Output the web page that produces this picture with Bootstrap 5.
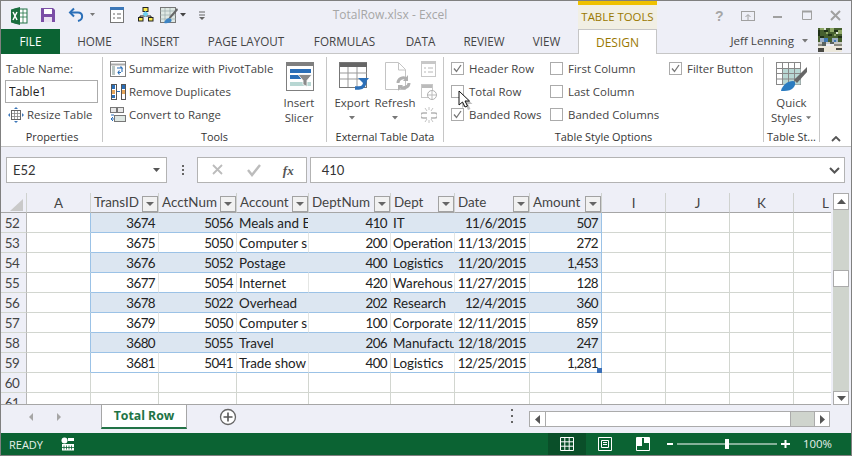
<!DOCTYPE html>
<html lang="en">
<head>
<meta charset="utf-8">
<title>TotalRow.xlsx - Excel</title>
<link rel="stylesheet" href="https://cdn.jsdelivr.net/npm/bootstrap@5.3.0/dist/css/bootstrap.min.css">
<style>
html,body{margin:0;width:852px;height:456px;overflow:hidden;background:#eeeff7}
body{font-family:"Open Sans","Liberation Sans",sans-serif;font-size:11.45px;color:#444;line-height:1}
svg{display:block;flex:none}
.win{width:852px;height:456px;border:1px solid #808080;position:relative;display:flex;flex-direction:column;overflow:hidden}
.titlebar{height:28px;flex:none}
.doc-title{width:368px;text-align:center;color:#a6a6a6;font-size:12px;padding-right:8px}
.ctx{width:79px;height:28px;background:#f1efe4;border-top:4px solid #efc100;color:#9a7800;font-size:11.4px}
.tabs{height:25px;flex:none;border-bottom:1px solid #c6c6c6;font-size:11.7px;color:#444}
.tabs .tb{height:25px;display:flex;align-items:center;justify-content:center;flex:none}
.tab-file{width:59px;background:#0b6333;color:#fff}
.w1{width:69px}.w2{width:62px}.w3{width:110px}.w4{width:87px}.w5{width:65px}.w6{width:62px}.w7{width:63px}
.tab-design{width:79px;background:#fff;border:1px solid #c6c6c6;border-bottom:0;color:#9a7800;height:26px!important;font-size:12px}
.user{font-size:11.6px;color:#444;margin-left:auto}
.ribbon{height:93px;flex:none;background:#fff;border-bottom:1px solid #c6c6c6;padding:3px 0 0 1px}
.grp{height:85px;border-right:1px solid #c6c6c6;display:flex;flex-direction:column;flex:none}
.grp-body{height:75px;display:flex;flex:none}
.grp-label{height:13px;text-align:center;color:#333;font-size:10.9px;flex:none;white-space:nowrap}
.g1{width:101px}.g2{width:224px}.g3{width:117px}.g4{width:320px}.g5{width:56px}
.small-col{display:flex;flex-direction:column}
.small-row{height:23px;display:flex;align-items:center;white-space:nowrap;flex:none}
.big{display:flex;flex-direction:column;align-items:center;text-align:center;line-height:15px}
.ico{margin-right:3px}
.name-input{width:93px;height:23px;border:1px solid #ababab;border-radius:0;padding:0 3px;font:inherit;font-size:12px;color:#222;box-shadow:none;min-height:0}
.form-check-input.xl{width:13px;height:13px;margin:0 5px 0 0;border:1px solid #ababab;border-radius:0;flex:none;float:none}
.form-check-input.xl:checked{background-color:#fff;border-color:#ababab;background-size:13px 13px;background-image:url("data:image/svg+xml,%3Csvg xmlns='http://www.w3.org/2000/svg' viewBox='0 0 13 13'%3E%3Cpath d='M3 6.500l2.500 3L10 3' fill='none' stroke='%23777' stroke-width='1.300'/%3E%3C/svg%3E")}
.fbar{height:46px;flex:none;padding:10px 6px 0 5px}
.fbox{height:26px;background:#fff;border:1px solid #b3b3b3;display:flex;align-items:center;color:#333;font-family:Lato,"Liberation Sans",sans-serif;font-size:13px}
.namebox{width:161px;padding:0 5px 0 6px}
.fnbox{width:110px;padding:0 12px 0 13px}
.formula{width:536px;margin-left:3px;padding:0 0 0 11px}
.gridrow{height:212px;flex:none}
.gridwrap{width:830px;height:212px;overflow:hidden;border-bottom:1px solid #a6a6a6;flex:none}
.sheet.table{width:857px;table-layout:fixed;border-collapse:separate;border-spacing:0;margin:0;font-family:Lato,"Liberation Sans",sans-serif;font-size:13.4px;color:#222;--bs-table-bg:transparent}
.sheet.table>:not(caption)>*>*{padding:0 2px;height:20px;border:0;border-right:1px solid #d2d6d0;border-bottom:1px solid #d2d6d0;white-space:nowrap;overflow:hidden;background:#fff;box-shadow:none;vertical-align:middle;line-height:18px;font-weight:400;color:#222}
.sheet.table>thead>tr>th{background:#eeeff7;border-right-color:#cfd2cf;border-bottom:1px solid #a6a6a6;color:#444;text-align:center;padding:0}
.sheet.table>thead>tr>th.h{text-align:left;padding:0 0 0 3px;color:#444}
.sheet.table>tbody>tr>td.rh{background:#eeeff7;text-align:center;color:#444;border-right-color:#b5b5b5;padding:0 3px 0 0;letter-spacing:-.4px}
.hin{display:flex;justify-content:space-between;height:19px;align-items:flex-start;line-height:18px}
.fb{width:16px;height:16px;margin-top:3px;border:1px solid #a2a2a2;background:#f1f1f1;display:flex;align-items:center;justify-content:center;flex:none}
.sheet.table>tbody>tr>td.r{text-align:right;padding-right:3px;letter-spacing:-.6px}
.sheet.table>tbody>tr>td.bl{border-bottom-color:#9bc2e6}
.sheet.table>tbody>tr>td.vl{border-right-color:#e4e6e4}
.sheet.table>tbody>tr>td.be{border-right-color:#9bc2e6}
.sheet.table>tbody>tr.band>td.c{background:#dce6f1;border-right-color:#dce6f1}
.sheet.table>tbody>tr.band>td.be{border-right-color:#9bc2e6}
.sheet.table>tbody>tr>td.a{border-right-color:#9bc2e6}
.handle{position:absolute;left:596px;top:367px;width:5px;height:5px;background:#3a6fb7}
.vs{width:16px;height:212px;margin-left:2px;background:#cfd4cd;flex:none;display:flex;flex-direction:column}
.vs .btn-x{height:17px;background:#fff;border:1px solid #ababab;display:flex;align-items:center;justify-content:center;flex:none}
.vthumb{height:17px;margin-top:60px;background:#fff;border:1px solid #ababab;flex:none}
.tabbar{height:28px;flex:none}
.sheet-tab{width:86px;height:24px;background:#fff;border:1px solid #a6a6a6;border-top:0;border-bottom:2px solid #217346;color:#217346;font-weight:700;font-size:12.3px;display:flex;align-items:center;justify-content:center}
.hs{width:301px;height:16px;border:1px solid #ababab;background:#cfd4cd;display:flex;margin-top:6px}
.hs .e{width:15px;background:#fff;display:flex;align-items:center;justify-content:center;flex:none}
.hs .t{width:246px;background:#fff;border-left:1px solid #ababab;border-right:1px solid #ababab;flex:none}
.statusbar{height:22px;flex:none;background:#0b6333;color:#e8f0ea;font-size:11px}
.viewbtn{width:38px;height:22px;display:flex;align-items:center;justify-content:center;flex:none}
.viewbtn.on{background:#0a4f29}
.macro{margin-left:18px}
.zoomv{width:57px;padding-left:9px;font-size:11.4px;flex:none}
.cursor{position:absolute;left:456px;top:89px}
</style>
</head>
<body>
<div class="win">

<header class="titlebar d-flex align-items-start">
  <svg width="209" height="28" viewBox="1 1 209 28">
    <rect x="15" y="9" width="12" height="14" fill="#fff" stroke="#217346"/>
    <path d="M19 9v14M23 9v14M15 13h12M15 17h12" stroke="#217346" stroke-width=".8"/>
    <path d="M11 9.500l9-2.500v18l-9-2.500z" fill="#1a6e3f"/>
    <path d="M13 12l4 8M17 12l-4 8" stroke="#fff" stroke-width="1.500"/>
    <path d="M41 8h12l2 2v12h-14z" fill="#7b4ea6"/>
    <rect x="44" y="9" width="8" height="5" fill="#fff"/>
    <rect x="44" y="17" width="8" height="5" fill="#e9e1f1"/>
    <path d="M74 8.500l-4 4 4 4" fill="none" stroke="#2b6fb8" stroke-width="2"/>
    <path d="M71 12.500h7c5 0 6 7 0 8.500" fill="none" stroke="#2b6fb8" stroke-width="2"/>
    <path d="M90 13h5l-2.500 3z" fill="#777"/>
    <rect x="110.500" y="7.500" width="13" height="15" fill="#fff" stroke="#777"/>
    <rect x="110" y="7" width="14" height="3" fill="#3d77b8"/>
    <path d="M113 14h2M117 14h4M113 18h2M117 18h4" stroke="#666"/>
    <path d="M145.500 11v4M140 18v-2h11v2" fill="none" stroke="#222"/>
    <rect x="143" y="7.500" width="5" height="4" fill="#fbe94a" stroke="#222"/>
    <rect x="138.500" y="17.500" width="4.500" height="3.500" fill="#fbe94a" stroke="#222"/>
    <rect x="148.500" y="17.500" width="4.500" height="3.500" fill="#fbe94a" stroke="#222"/>
    <path d="M145.500 11l3 3-3 3-3-3z" fill="#6dcff0"/>
    <rect x="160.500" y="7.500" width="15" height="15" fill="#dfe8e4" stroke="#777"/>
    <path d="M160 11h16M165 8v14M170 8v14M160 15h16M160 19h16" stroke="#9aa" stroke-width=".7"/>
    <path d="M177 8l-7 8-2 3 3-1 7-8z" fill="#666"/>
    <path d="M164 23c1-4 5-6 7-4s-1 5-7 4z" fill="#3d84c4"/>
    <path d="M180 13h6l-3 3.500z" fill="#444"/>
    <path d="M199 12h6M199 15h6" stroke="#666" stroke-width="1"/><path d="M199 17h6l-3 3z" fill="#666"/>
  </svg>
  <div class="doc-title align-self-center">TotalRow.xlsx - Excel</div>
  <div class="ctx d-flex align-items-center justify-content-center">TABLE TOOLS</div>
  <svg width="194" height="28" viewBox="658 1 194 28">
    <text x="716" y="21" font-family="Liberation Sans" font-weight="700" font-size="14" fill="#a6a6a6">?</text>
    <rect x="742.500" y="11.500" width="13" height="9" fill="none" stroke="#a0a0a0"/>
    <path d="M749 20v-5M746.500 17l2.500-2.500 2.500 2.500" fill="none" stroke="#a0a0a0"/>
    <path d="M774 17h9" stroke="#a0a0a0" stroke-width="2"/>
    <path d="M803.500 11.500h9v8h-9z" fill="none" stroke="#a0a0a0"/><path d="M803 11.500h10" stroke="#a0a0a0" stroke-width="2"/>
    <path d="M832 11l9 9M841 11l-9 9" stroke="#a0a0a0" stroke-width="2"/>
  </svg>
</header>

<nav class="tabs d-flex">
  <div class="tb tab-file">FILE</div>
  <div class="tb w1">HOME</div><div class="tb w2">INSERT</div><div class="tb w3">PAGE LAYOUT</div><div class="tb w4">FORMULAS</div><div class="tb w5">DATA</div><div class="tb w6">REVIEW</div><div class="tb w7">VIEW</div>
  <div class="tb tab-design">DESIGN</div>
  <div class="user d-flex align-items-center">Jeff Lenning
    <svg class="ms-2" style="margin-right:9px" width="7" height="4" viewBox="0 0 7 4"><path d="M0 0h6l-3 3.500z" fill="#777"/></svg>
    <svg width="24" height="24" viewBox="0 0 12 12" shape-rendering="crispEdges" style="margin:-2px 9px 0 0">
      <path fill="#46602f" d="M0 0h12v7h-12z"/>
      <path fill="#8fa868" d="M1 0h2v1h-2zM6 0h2v2h-2zM10 1h2v2h-2zM4 2h1v1h-1zM8 3h1v1h-1z"/>
      <path fill="#1f3018" d="M0 1h1v3h-1zM3 1h2v1h-2zM8 1h2v1h-2zM5 3h2v1h-2zM10 4h2v1h-2zM1 4h2v1h-2z"/>
      <path fill="#dfe6d8" d="M3 0h1v1h-1zM9 2h1v1h-1z"/>
      <path fill="#9aaec4" d="M1 5h4v2h-4zM7 5h3v2h-3z"/>
      <path fill="#3f78b4" d="M3 5h2v2h-2zM8 6h1v1h-1z"/>
      <path fill="#c9cac4" d="M0 7h12v1h-12z"/>
      <path fill="#5a6461" d="M2 7h2v2h-2zM6 7h2v1h-2z"/>
      <path fill="#ece8dc" d="M0 9h12v3h-12z"/>
      <path fill="#8a8a80" d="M0 8h2v1h-2zM8 8h4v1h-4z"/>
      <path fill="#4a4a44" d="M0 10h3v2h-3zM9 10h3v1h-3z"/>
    </svg>
  </div>
</nav>

<section class="ribbon d-flex">
  <div class="grp g1">
    <div class="grp-body small-col" style="padding-left:3px">
      <div class="small-row" style="padding-left:1px">Table Name:</div>
      <div class="small-row"><input class="form-control name-input" value="Table1"></div>
      <div class="small-row">
        <svg class="ico" style="margin-left:3px" width="16" height="16" viewBox="0 0 16 16"><rect x="3.500" y="3.500" width="9" height="9" fill="#fff" stroke="#666"/><path d="M6.500 4v8M9.500 4v8M4 6.500h8M4 9.500h8" stroke="#888" stroke-width=".8"/><path d="M8 0l2 2h-4zM8 16l2-2h-4zM0 8l2-2v4zM16 8l-2-2v4z" fill="#3d77b8"/></svg>
        Resize Table
      </div>
    </div>
    <div class="grp-label">Properties</div>
  </div>

  <div class="grp g2">
    <div class="grp-body">
      <div class="small-col" style="width:184px;padding-left:7px">
        <div class="small-row">
          <svg class="ico" width="16" height="16" viewBox="0 0 16 16"><rect x=".5" y=".5" width="15" height="15" fill="#fff" stroke="#808080"/><path d="M1 3.500h14" stroke="#aaa" stroke-width="2"/><rect x="2" y="5" width="3" height="9" fill="#b9c6c4"/><path d="M7 7h5l-1.500-1.500M12 7v4m-2.500-1.500l-1.500 2 1.500 2M8 11.500h3" fill="none" stroke="#2b6fb8" stroke-width="1.100"/></svg>
          Summarize with PivotTable
        </div>
        <div class="small-row">
          <svg class="ico" width="16" height="16" viewBox="0 0 16 16" shape-rendering="crispEdges"><rect x="1" y="0" width="5" height="15" fill="#fff" stroke="#555"/><path d="M2 1h3v4h-3z" fill="#2b6fb8"/><path d="M2 6h3v4h-3z" fill="#e5a55a"/><path d="M2 11h3v3h-3z" fill="#2b6fb8"/><rect x="11" y="0" width="4" height="15" fill="#fff" stroke="#555"/><path d="M12 1h3v4h-3z" fill="#2b6fb8"/><path d="M12 6h3v4h-3z" fill="#e5a55a"/><path d="M7 7h3v1h-3z" fill="#2b6fb8"/></svg>
          Remove Duplicates
        </div>
        <div class="small-row">
          <svg class="ico" width="16" height="16" viewBox="0 0 16 16"><rect x=".5" y=".5" width="6" height="5" fill="#e8e8e8" stroke="#777"/><rect x="7.500" y=".5" width="6" height="5" fill="#e8e8e8" stroke="#777"/><rect x="4.500" y="8.500" width="11" height="6" fill="#dfe8e4" stroke="#777"/><path d="M1 8h3M3 10l-2 2 2 2M1 12h3" fill="none" stroke="#2b6fb8"/></svg>
          Convert to Range
        </div>
      </div>
      <div class="big" style="width:32px;margin-left:-3px;padding-top:5px">
        <svg width="28" height="29" viewBox="0 0 28 29"><rect x=".5" y=".5" width="27" height="28" fill="#fff" stroke="#7f7f7f"/><rect x="1" y="1" width="26" height="3" fill="#7f7f7f"/><rect x="4" y="7" width="21" height="4" fill="#2b6fb8"/><rect x="4" y="13" width="11" height="4" fill="#2b6fb8"/><rect x="4" y="20" width="21" height="4" fill="#b8d7d3"/><path d="M12 12.500h14l-5 6v6l-4-2v-4z" fill="#8a8a8a" stroke="#fff" stroke-width=".8"/></svg>
        <div style="margin-top:4px;white-space:nowrap;margin-left:-2px">Insert<br>Slicer</div>
      </div>
    </div>
    <div class="grp-label">Tools</div>
  </div>

  <div class="grp g3">
    <div class="grp-body">
      <div class="big" style="width:46px;margin-left:2px;padding-top:5px">
        <svg style="margin-left:3px" width="30" height="29" viewBox="0 0 30 29"><rect x=".5" y=".5" width="27" height="25" fill="#fff" stroke="#777"/><rect x="1" y="1" width="27" height="4" fill="#666"/><path d="M1 11h27M1 17h27M9 5v20M18 5v20" stroke="#999"/><path d="M16 26h4c4 0 6-3 6-7" fill="none" stroke="#2b6fb8" stroke-width="3.500"/><path d="M19 16h11l-5 6z" fill="#2b6fb8"/></svg>
        <div style="margin-top:4px">Export</div>
        <svg width="7" height="4" viewBox="0 0 7 4" style="margin-top:6px"><path d="M0 0h6l-3 3.500z" fill="#777"/></svg>
      </div>
      <div class="big" style="width:40px;padding-top:5px">
        <svg style="margin-left:5px" width="28" height="29" viewBox="0 0 28 29"><path d="M1.500 .5h13l7 7v20h-20z" fill="#fff" stroke="#c4c4c4"/><path d="M14.500 1v7h7" fill="none" stroke="#c4c4c4"/><path d="M14 21c0-4 5-7 9-4" fill="none" stroke="#b0b0b0" stroke-width="3"/><path d="M25 21c0 4-5 6-9 4" fill="none" stroke="#b0b0b0" stroke-width="3"/><path d="M24 13v6h-5zM14 29v-6h5z" fill="#b0b0b0"/></svg>
        <div style="margin-top:4px">Refresh</div>
        <svg width="7" height="4" viewBox="0 0 7 4" style="margin-top:6px"><path d="M0 0h6l-3 3.500z" fill="#777"/></svg>
      </div>
      <div class="small-col" style="padding-left:6px">
        <div class="small-row"><svg width="15" height="16" viewBox="0 0 15 16"><rect x=".5" y=".5" width="14" height="15" fill="#fff" stroke="#c8c8c8"/><rect x="1" y="1" width="13" height="2" fill="#c8c8c8"/><path d="M3 7h2M7 7h5M3 11h2M7 11h5" stroke="#b8b8b8"/></svg></div>
        <div class="small-row"><svg width="16" height="16" viewBox="0 0 16 16"><rect x=".5" y=".5" width="11" height="13" fill="#fff" stroke="#c8c8c8"/><rect x="1" y="1" width="10" height="3" fill="#bbb"/><circle cx="11" cy="11" r="4.500" fill="#fff" stroke="#b0b0b0"/><path d="M7 11h8M11 7v8" stroke="#bbb"/></svg></div>
        <div class="small-row"><svg width="16" height="16" viewBox="0 0 16 16"><path d="M6 6h-4a2.500 2.500 0 0 0 0 5h4M10 6h4a2.500 2.500 0 0 1 0 5h-4" fill="none" stroke="#b4b4b4" stroke-width="1.500"/><path d="M4 1l2 3M8 0v3M12 1l-2 3M4 15l2-3M8 16v-3M12 15l-2-3" stroke="#c4c4c4"/></svg></div>
      </div>
    </div>
    <div class="grp-label">External Table Data</div>
  </div>

  <div class="grp g4">
    <div class="grp-body">
      <div class="small-col" style="width:106px;padding-left:7px">
        <label class="small-row"><input class="form-check-input xl" type="checkbox" checked>Header Row</label>
        <label class="small-row"><input class="form-check-input xl" type="checkbox">Total Row</label>
        <label class="small-row"><input class="form-check-input xl" type="checkbox" checked>Banded Rows</label>
      </div>
      <div class="small-col" style="width:119px">
        <label class="small-row"><input class="form-check-input xl" type="checkbox">First Column</label>
        <label class="small-row"><input class="form-check-input xl" type="checkbox">Last Column</label>
        <label class="small-row"><input class="form-check-input xl" type="checkbox">Banded Columns</label>
      </div>
      <div class="small-col">
        <label class="small-row"><input class="form-check-input xl" type="checkbox" checked>Filter Button</label>
      </div>
    </div>
    <div class="grp-label">Table Style Options</div>
  </div>

  <div class="grp g5">
    <div class="grp-body">
      <div class="big w-100" style="padding-top:5px">
        <svg width="31" height="29" viewBox="0 0 31 29"><rect x=".5" y=".5" width="24" height="22" fill="#fff" stroke="#888"/><rect x="6.500" y="6.500" width="18" height="16" fill="#b8d7d3"/><path d="M1 6.500h24M1 11.500h24M1 17h24M6.500 1v22M12.500 1v22M18.500 1v22" stroke="#888"/><path d="M31 5l-13 13 3 3 10-11z" fill="#666"/><path d="M5 29c1-6 7-10 12-10 3 0 3 5-1 8-3 2-7 2-11 2z" fill="#2b7cc0"/></svg>
        <div style="margin-top:4px">Quick</div>
        <div class="d-flex align-items-center">Styles<svg class="ms-1" width="6" height="4" viewBox="0 0 7 4"><path d="M0 0h6l-3 3.500z" fill="#777"/></svg></div>
      </div>
    </div>
    <div class="grp-label">Table St...</div>
  </div>
  <div class="flex-grow-1 d-flex justify-content-center align-items-end" style="height:85px">
    <svg width="10" height="6" viewBox="0 0 10 6"><path d="M1 5l4-4 4 4" fill="none" stroke="#555" stroke-width="1.800"/></svg>
  </div>
</section>

<section class="fbar d-flex align-items-start">
  <div class="fbox namebox justify-content-between">E52<svg width="8" height="5" viewBox="0 0 8 5"><path d="M0 0h7l-3.500 4z" fill="#555"/></svg></div>
  <svg width="30" height="26" viewBox="0 0 30 26"><path d="M15 8h2v2h-2zM15 12h2v2h-2zM15 16h2v2h-2z" fill="#666"/></svg>
  <div class="fbox fnbox justify-content-between">
    <svg width="14" height="14" viewBox="0 0 14 14"><path d="M2 2l9 9M11 2l-9 9" stroke="#bcbcbc" stroke-width="1.800"/></svg>
    <svg width="16" height="14" viewBox="0 0 16 14"><path d="M2 7l4 5 8-10" fill="none" stroke="#bcbcbc" stroke-width="2.400"/></svg>
    <i style="font-family:'Liberation Serif',serif;font-weight:700;color:#555;font-size:13px">fx</i>
  </div>
  <div class="fbox formula">410<svg class="ms-auto me-1" width="11" height="7" viewBox="0 0 11 7"><path d="M1 1l4.500 4.500L10 1" fill="none" stroke="#555" stroke-width="2"/></svg></div>
</section>

<section class="gridrow d-flex">
  <div class="gridwrap">
    <table class="table sheet">
      <colgroup><col style="width:26px"><col style="width:64px"><col style="width:68px"><col style="width:78px"><col style="width:72px"><col style="width:82px"><col style="width:64px"><col style="width:75px"><col style="width:72px"><col style="width:64px"><col style="width:64px"><col style="width:64px"><col style="width:64px"></colgroup>
      <thead><tr>
        <th><svg style="margin:3px 2px 0 auto" width="16" height="15" viewBox="0 0 16 15"><path d="M15 2v12h-13z" fill="#c9c9c9"/></svg></th>
        <th>A</th>
        <th class="h"><div class="hin">TransID<span class="fb"><svg width="8" height="4" viewBox="0 0 8 4"><path d="M0 0h8l-4 4z" fill="#666"/></svg></span></div></th>
        <th class="h"><div class="hin">AcctNum<span class="fb"><svg width="8" height="4" viewBox="0 0 8 4"><path d="M0 0h8l-4 4z" fill="#666"/></svg></span></div></th>
        <th class="h"><div class="hin">Account<span class="fb"><svg width="8" height="4" viewBox="0 0 8 4"><path d="M0 0h8l-4 4z" fill="#666"/></svg></span></div></th>
        <th class="h"><div class="hin">DeptNum<span class="fb"><svg width="8" height="4" viewBox="0 0 8 4"><path d="M0 0h8l-4 4z" fill="#666"/></svg></span></div></th>
        <th class="h"><div class="hin">Dept<span class="fb"><svg width="8" height="4" viewBox="0 0 8 4"><path d="M0 0h8l-4 4z" fill="#666"/></svg></span></div></th>
        <th class="h"><div class="hin">Date<span class="fb"><svg width="8" height="4" viewBox="0 0 8 4"><path d="M0 0h8l-4 4z" fill="#666"/></svg></span></div></th>
        <th class="h"><div class="hin">Amount<span class="fb"><svg width="8" height="4" viewBox="0 0 8 4"><path d="M0 0h8l-4 4z" fill="#666"/></svg></span></div></th>
        <th>I</th><th>J</th><th>K</th><th>L</th>
      </tr></thead>
      <tbody>
        <tr class="band"><td class="rh">52</td><td class="a"></td><td class="c r bl vl">3674</td><td class="c r bl vl">5056</td><td class="c bl vl">Meals and E</td><td class="c r bl vl">410</td><td class="c bl vl">IT</td><td class="c r bl vl">11/6/2015</td><td class="c r bl be">507</td><td></td><td></td><td></td><td></td></tr>
        <tr><td class="rh">53</td><td class="a"></td><td class="r bl vl">3675</td><td class="r bl vl">5050</td><td class="bl vl">Computer s</td><td class="r bl vl">200</td><td class="bl vl">Operation</td><td class="r bl vl">11/13/2015</td><td class="r bl be">272</td><td></td><td></td><td></td><td></td></tr>
        <tr class="band"><td class="rh">54</td><td class="a"></td><td class="c r bl vl">3676</td><td class="c r bl vl">5052</td><td class="c bl vl">Postage</td><td class="c r bl vl">400</td><td class="c bl vl">Logistics</td><td class="c r bl vl">11/20/2015</td><td class="c r bl be">1,453</td><td></td><td></td><td></td><td></td></tr>
        <tr><td class="rh">55</td><td class="a"></td><td class="r bl vl">3677</td><td class="r bl vl">5054</td><td class="bl vl">Internet</td><td class="r bl vl">420</td><td class="bl vl">Warehous</td><td class="r bl vl">11/27/2015</td><td class="r bl be">128</td><td></td><td></td><td></td><td></td></tr>
        <tr class="band"><td class="rh">56</td><td class="a"></td><td class="c r bl vl">3678</td><td class="c r bl vl">5022</td><td class="c bl vl">Overhead</td><td class="c r bl vl">202</td><td class="c bl vl">Research</td><td class="c r bl vl">12/4/2015</td><td class="c r bl be">360</td><td></td><td></td><td></td><td></td></tr>
        <tr><td class="rh">57</td><td class="a"></td><td class="r bl vl">3679</td><td class="r bl vl">5050</td><td class="bl vl">Computer s</td><td class="r bl vl">100</td><td class="bl vl">Corporate</td><td class="r bl vl">12/11/2015</td><td class="r bl be">859</td><td></td><td></td><td></td><td></td></tr>
        <tr class="band"><td class="rh">58</td><td class="a"></td><td class="c r bl vl">3680</td><td class="c r bl vl">5055</td><td class="c bl vl">Travel</td><td class="c r bl vl">206</td><td class="c bl vl">Manufactu</td><td class="c r bl vl">12/18/2015</td><td class="c r bl be">247</td><td></td><td></td><td></td><td></td></tr>
        <tr><td class="rh">59</td><td class="a"></td><td class="r bl vl">3681</td><td class="r bl vl">5041</td><td class="bl vl">Trade show</td><td class="r bl vl">400</td><td class="bl vl">Logistics</td><td class="r bl vl">12/25/2015</td><td class="r bl be">1,281</td><td></td><td></td><td></td><td></td></tr>
        <tr><td class="rh">60</td><td></td><td></td><td></td><td></td><td></td><td></td><td></td><td></td><td></td><td></td><td></td><td></td></tr>
        <tr><td class="rh">61</td><td></td><td></td><td></td><td></td><td></td><td></td><td></td><td></td><td></td><td></td><td></td><td></td></tr>
      </tbody>
    </table>
  </div>
  <div class="vs">
    <div class="btn-x"><svg width="9" height="5" viewBox="0 0 9 5"><path d="M0 5h9l-4.500-5z" fill="#555"/></svg></div>
    <div class="vthumb"></div>
    <div class="btn-x mt-auto" style="height:14px"><svg width="9" height="5" viewBox="0 0 9 5"><path d="M0 0h9l-4.500 5z" fill="#555"/></svg></div>
  </div>
</section>
<span class="handle"></span>

<section class="tabbar d-flex align-items-start">
  <svg width="100" height="28" viewBox="1 406 100 28"><path d="M33 414v8l-4-4zM57 414v8l4-4z" fill="#a6a6a6"/></svg>
  <div class="sheet-tab">Total Row</div>
  <svg width="342" height="28" viewBox="187 406 342 28"><circle cx="228" cy="418" r="7.500" fill="#fff" stroke="#666" stroke-width="1.300"/><path d="M223.500 418h9M228 413.500v9" stroke="#555" stroke-width="1.600"/><path d="M511 410h2v2h-2zM511 416h2v2h-2zM511 422h2v2h-2z" fill="#666"/></svg>
  <div class="hs">
    <div class="e"><svg width="5" height="9" viewBox="0 0 5 9"><path d="M5 0v9l-5-4.500z" fill="#555"/></svg></div>
    <div class="t"></div>
    <div class="e ms-auto" style="border-left:1px solid #ababab"><svg width="5" height="9" viewBox="0 0 5 9"><path d="M0 0v9l5-4.500z" fill="#555"/></svg></div>
  </div>
</section>

<footer class="statusbar d-flex align-items-center">
  <span class="ms-2">READY</span>
  <svg class="macro" width="14" height="14" viewBox="0 0 14 14"><circle cx="3.500" cy="3.500" r="3" fill="#fff"/><rect x="7" y="1" width="6" height="3" fill="#fff"/><rect x="1" y="7" width="12" height="6.500" fill="#fff"/><path d="M3 8.500v4M5.500 8.500v4M8 8.500v4M10.500 8.500v4M1 10.500h12" stroke="#0b6333" stroke-width=".8"/></svg>
  <div class="viewbtn on ms-auto"><svg width="14" height="14" viewBox="0 0 14 14"><path d="M.5.5h13v13h-13zM.5 4.800h13M.5 9.200h13M4.800.5v13M9.200.5v13" fill="none" stroke="#fff"/></svg></div>
  <div class="viewbtn"><svg width="14" height="14" viewBox="0 0 14 14"><path d="M.5.5h13v13h-13z" fill="none" stroke="#fff"/><path d="M3.500 3.500h7v7h-7zM5 5.500h4M5 7.500h4" fill="none" stroke="#fff"/></svg></div>
  <div class="viewbtn"><svg width="14" height="14" viewBox="0 0 14 14"><path d="M.5.5h13v13h-13z" fill="none" stroke="#fff"/><path d="M1 1h5v8h-5zM8 1h5v5h-5z" fill="#fff"/></svg></div>
  <svg width="132" height="14" viewBox="0 0 132 14"><path d="M5 7h6M119 7h9M123.500 3v8" stroke="#fff" stroke-width="2"/><path d="M15 7h100" stroke="#fff"/><rect x="63" y="2" width="4" height="10" fill="#fff"/></svg>
  <span class="zoomv">100%</span>
</footer>

<svg class="cursor" width="17" height="21" viewBox="0 0 17 21"><path d="M3 3v14l3.500-3 2.500 5 2.500-1-2.500-5h4.500z" fill="#000" opacity=".25" transform="translate(2 1)"/><path d="M2 1v14l3.500-3 2.500 5 2.500-1-2.500-5h4.500z" fill="#fff" stroke="#111" stroke-width="1"/></svg>
</div>
<script src="https://cdn.jsdelivr.net/npm/bootstrap@5.3.0/dist/js/bootstrap.bundle.min.js"></script>
</body>
</html>
